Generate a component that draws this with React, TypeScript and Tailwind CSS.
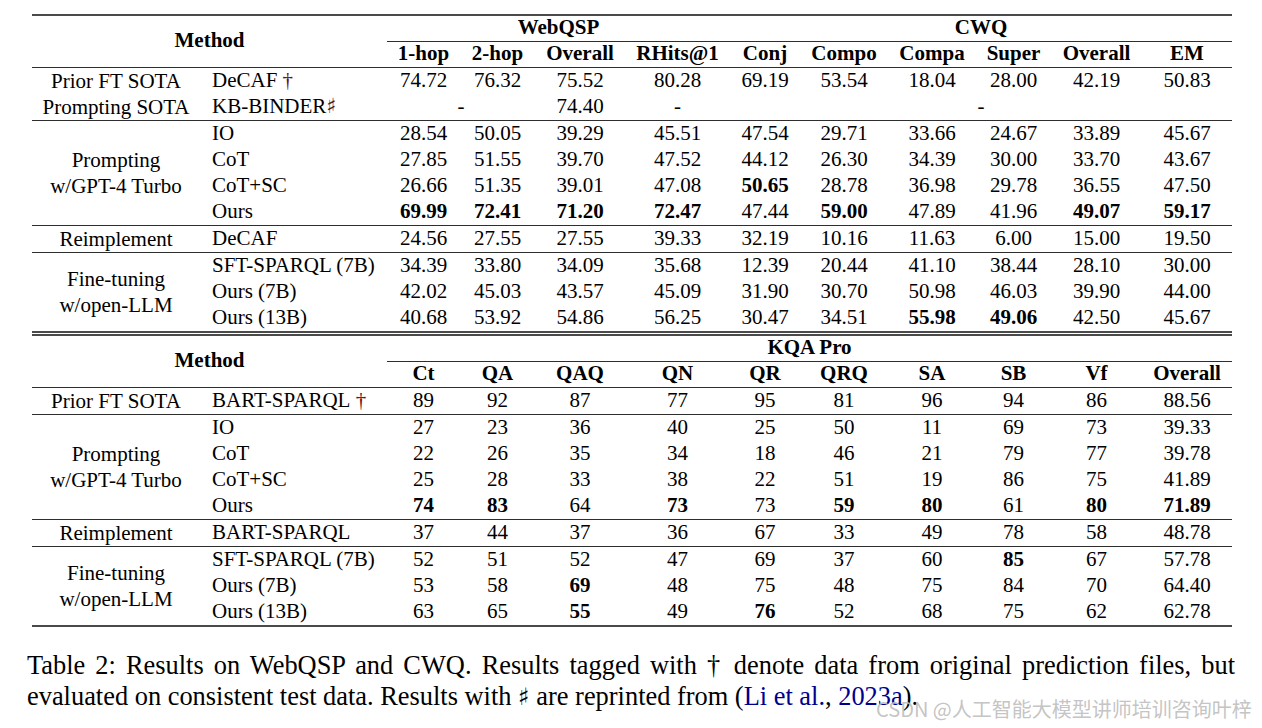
import type { ReactNode } from 'react'

type Group = { label: string[]; rows: { m: ReactNode; c: string[] }[] }

const fullCols =
  'grid grid-cols-[168px_187px_73px_75px_90px_105px_70px_88px_88px_75px_91px_90px] auto-rows-[26px]'
const dataCols = 'grid grid-cols-[73px_75px_90px_105px_70px_88px_88px_75px_91px_90px]'

const rowSpan: Record<number, string> = {
  1: 'row-span-1',
  2: 'row-span-2',
  3: 'row-span-3',
  4: 'row-span-4',
}

const colSpan: Record<number, string> = {
  1: 'col-span-1',
  2: 'col-span-2',
  6: 'col-span-6',
}

function Dag() {
  return <span className="text-[#6b0f1a]">†</span>
}

// "*" prefix = bold, "|n" suffix = colspan
function Cell({ raw }: { raw: string }) {
  let v = raw
  let span = 1
  const m = v.match(/^(.*)\|(\d+)$/)
  if (m) {
    v = m[1]
    span = Number(m[2])
  }
  const bold = v.startsWith('*')
  if (bold) v = v.slice(1)
  return (
    <div className={`${colSpan[span]} flex items-center justify-center ${bold ? 'font-bold' : ''}`}>{v}</div>
  )
}

function Section({ groups }: { groups: Group[] }) {
  return (
    <div className="flex flex-col">
      {groups.map((g, gi) => (
        <div key={gi} className={fullCols}>
          <div
            className={`${rowSpan[g.rows.length]} flex flex-col items-center justify-center leading-[26px]`}
          >
            {g.label.map((l) => (
              <div key={l}>{l}</div>
            ))}
          </div>
          {g.rows.map((r, ri) => (
            <div key={ri} className="contents">
              <div className="flex items-center whitespace-nowrap pl-3">{r.m}</div>
              {r.c.map((c, ci) => (
                <Cell key={ci} raw={c} />
              ))}
            </div>
          ))}
        </div>
      ))}
    </div>
  )
}

function Rule() {
  return <div className="h-px bg-[#2e2e2e]" />
}

function Header({ top, sub }: { top: { t: string; w: string }[]; sub: string[] }) {
  return (
    <div className="flex font-bold">
      <div className="flex w-[355px] items-center justify-center pb-[1px]">Method</div>
      <div className="w-[845px]">
        <div className="flex h-[25px] leading-[22px]">
          {top.map((x) => (
            <div key={x.t} className={`${x.w} text-center`}>
              {x.t}
            </div>
          ))}
        </div>
        <div className="h-px bg-[#2e2e2e]" />
        <div className={`${dataCols} h-[25px] text-center leading-[22px]`}>
          {sub.map((s, i) => (
            <div key={i}>{s}</div>
          ))}
        </div>
      </div>
    </div>
  )
}

const t1: Group[][] = [
  [
    {
      label: ['Prior FT SOTA'],
      rows: [
        {
          m: (
            <>
              DeCAF&nbsp;<Dag />
            </>
          ),
          c: ['74.72', '76.32', '75.52', '80.28', '69.19', '53.54', '18.04', '28.00', '42.19', '50.83'],
        },
      ],
    },
    {
      label: ['Prompting SOTA'],
      rows: [
        {
          m: (
            <>
              KB-BINDER<span className="font-['DejaVu_Serif',serif] text-[21px] text-[#4a1a1e]">♯</span>
            </>
          ),
          c: ['-|2', '74.40', '-', '-|6'],
        },
      ],
    },
  ],
  [
    {
      label: ['Prompting', 'w/GPT-4 Turbo'],
      rows: [
        { m: 'IO', c: ['28.54', '50.05', '39.29', '45.51', '47.54', '29.71', '33.66', '24.67', '33.89', '45.67'] },
        { m: 'CoT', c: ['27.85', '51.55', '39.70', '47.52', '44.12', '26.30', '34.39', '30.00', '33.70', '43.67'] },
        { m: 'CoT+SC', c: ['26.66', '51.35', '39.01', '47.08', '*50.65', '28.78', '36.98', '29.78', '36.55', '47.50'] },
        { m: 'Ours', c: ['*69.99', '*72.41', '*71.20', '*72.47', '47.44', '*59.00', '47.89', '41.96', '*49.07', '*59.17'] },
      ],
    },
  ],
  [
    {
      label: ['Reimplement'],
      rows: [{ m: 'DeCAF', c: ['24.56', '27.55', '27.55', '39.33', '32.19', '10.16', '11.63', '6.00', '15.00', '19.50'] }],
    },
  ],
  [
    {
      label: ['Fine-tuning', 'w/open-LLM'],
      rows: [
        { m: 'SFT-SPARQL (7B)', c: ['34.39', '33.80', '34.09', '35.68', '12.39', '20.44', '41.10', '38.44', '28.10', '30.00'] },
        { m: 'Ours (7B)', c: ['42.02', '45.03', '43.57', '45.09', '31.90', '30.70', '50.98', '46.03', '39.90', '44.00'] },
        { m: 'Ours (13B)', c: ['40.68', '53.92', '54.86', '56.25', '30.47', '34.51', '*55.98', '*49.06', '42.50', '45.67'] },
      ],
    },
  ],
]

const t2: Group[][] = [
  [
    {
      label: ['Prior FT SOTA'],
      rows: [
        {
          m: (
            <>
              BART-SPARQL&nbsp;<Dag />
            </>
          ),
          c: ['89', '92', '87', '77', '95', '81', '96', '94', '86', '88.56'],
        },
      ],
    },
  ],
  [
    {
      label: ['Prompting', 'w/GPT-4 Turbo'],
      rows: [
        { m: 'IO', c: ['27', '23', '36', '40', '25', '50', '11', '69', '73', '39.33'] },
        { m: 'CoT', c: ['22', '26', '35', '34', '18', '46', '21', '79', '77', '39.78'] },
        { m: 'CoT+SC', c: ['25', '28', '33', '38', '22', '51', '19', '86', '75', '41.89'] },
        { m: 'Ours', c: ['*74', '*83', '64', '*73', '73', '*59', '*80', '61', '*80', '*71.89'] },
      ],
    },
  ],
  [
    {
      label: ['Reimplement'],
      rows: [{ m: 'BART-SPARQL', c: ['37', '44', '37', '36', '67', '33', '49', '78', '58', '48.78'] }],
    },
  ],
  [
    {
      label: ['Fine-tuning', 'w/open-LLM'],
      rows: [
        { m: 'SFT-SPARQL (7B)', c: ['52', '51', '52', '47', '69', '37', '60', '*85', '67', '57.78'] },
        { m: 'Ours (7B)', c: ['53', '58', '*69', '48', '75', '48', '75', '84', '70', '64.40'] },
        { m: 'Ours (13B)', c: ['63', '65', '*55', '49', '*76', '52', '68', '75', '62', '62.78'] },
      ],
    },
  ],
]

function Body({ sections }: { sections: Group[][] }) {
  return (
    <>
      {sections.map((s, i) => (
        <div key={i}>
          <Rule />
          <Section groups={s} />
        </div>
      ))}
    </>
  )
}

export default function App() {
  return (
    <div className="relative h-[728px] w-[1262px] overflow-hidden bg-white font-['Liberation_Serif',serif] text-black">
      <div className="ml-[32px] w-[1200px] pt-[14px] text-[21px]">
        <div className="h-[2px] bg-[#4a4a4a]" />
        <Header
          top={[
            { t: 'WebQSP', w: 'w-[343px]' },
            { t: 'CWQ', w: 'w-[502px]' },
          ]}
          sub={['1-hop', '2-hop', 'Overall', 'RHits@1', 'Conj', 'Compo', 'Compa', 'Super', 'Overall', 'EM']}
        />
        <Body sections={t1} />
        <div className="h-[2px] bg-[#4a4a4a]" />
        <div className="h-px" />
        <div className="h-[2px] bg-[#4a4a4a]" />
        <Header
          top={[{ t: 'KQA Pro', w: 'w-[845px]' }]}
          sub={['Ct', 'QA', 'QAQ', 'QN', 'QR', 'QRQ', 'SA', 'SB', 'Vf', 'Overall']}
        />
        <Body sections={t2} />
        <div className="h-[2px] bg-[#4a4a4a]" />
      </div>

      <div className="mt-[23px] ml-[27px] w-[1208px] text-[26.4px] leading-[31px]">
        <div className="text-justify [text-align-last:justify]">
          Table 2: Results on WebQSP and CWQ. Results tagged with † denote data from original prediction files, but
        </div>
        <div>
          evaluated on consistent test data. Results with{' '}
          <span className="font-['DejaVu_Serif',serif] text-[24px]">♯</span> are reprinted from (
          <span className="text-[#00008f]">Li et al.</span>, <span className="text-[#00008f]">2023a</span>).
        </div>
      </div>

      <div className="absolute top-[695px] left-[876px] font-['Noto_Sans_CJK_SC',sans-serif] text-[20px] leading-[28px] text-[#bdbdbd]/90">
        CSDN @人工智能大模型讲师培训咨询叶梓
      </div>
    </div>
  )
}
